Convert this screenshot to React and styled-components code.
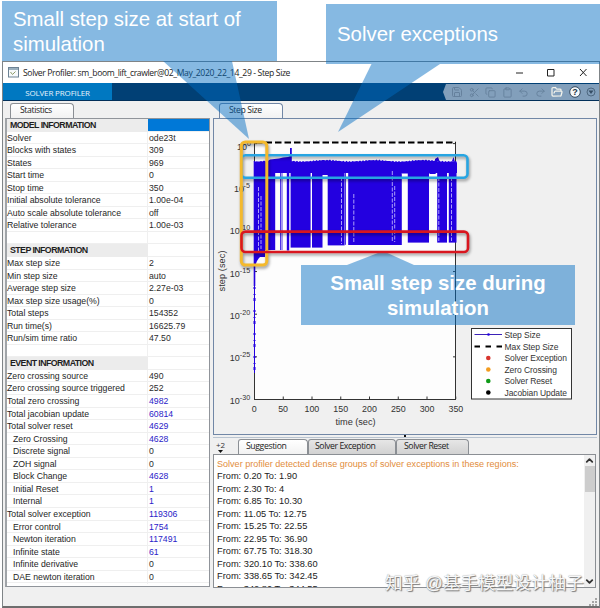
import styled, { createGlobalStyle } from "styled-components";
import { Save, Scissors, Copy, Clipboard, Undo2, Redo2, FolderOpen, ChevronUp, ChevronDown } from "lucide-react";

const GlobalStyle = createGlobalStyle`
    * {
        box-sizing: border-box;
    }
    body {
        margin: 0;
        background-color: #fff;
        font-family: "Liberation Sans", Arial, sans-serif;
    }
`
const Page = styled.div`
    position: relative;
    width: 600px;
    height: 608px;
    padding: 61px 0 0 2px;
    overflow: hidden;
`
const Window = styled.div`
    height: 547px;
    display: flex;
    flex-direction: column;
    border: 1px solid #7f8487;
    border-bottom: 2px solid #6e6e6e;
    background-color: #f0f0f0;
`
const TitleBar = styled.div`
    height: 21px;
    flex: none;
    display: flex;
    align-items: center;
    padding-left: 5px;
    background-color: #fff;
`
const Title = styled.div`
    flex: 1;
    margin-left: 4px;
    font: 8.6px "Open Sans", sans-serif;
    letter-spacing: -0.37px;
    color: #1c1c1c;
    white-space: nowrap;
`
const WindowButtons = styled.svg`
    width: 90px;
    height: 20px;
    flex: none;
`
const Ribbon = styled.div`
    height: 18px;
    flex: none;
    display: flex;
    justify-content: space-between;
    background-color: #014075;
    border-bottom: 1px solid #02305a;
`
const RibbonTab = styled.div`
    width: 109px;
    display: flex;
    align-items: center;
    justify-content: center;
    background-color: #0078c1;
    color: #e8f4fc;
    font: 8px "Open Sans", sans-serif;
    letter-spacing: -0.15px;
    padding-top: 2px;
`
const QuickAccess = styled.div`
    width: 156px;
    height: 16px;
    margin-top: 1px;
    padding: 0 3px 0 8px;
    display: flex;
    align-items: center;
    justify-content: space-between;
    background-color: #829fbb;
    color: #66819d;
    clip-path: polygon(3px 0, 100% 0, 100% 100%, 3px 100%, 0 50%);
`
const Content = styled.div`
    flex: 1;
    display: flex;
    padding: 2px 0 0 2px;
`
const StatsPane = styled.div`
    width: 208px;
    flex: none;
`
const RightPane = styled.div`
    flex: 1;
    min-width: 0;
`
const TabRow = styled.div`
    height: ${props => props.$height || 15}px;
    padding-left: ${props => props.$indent || 5}px;
    display: flex;
    align-items: flex-end;
`
const Tab = styled.div`
    width: ${props => props.$width}px;
    height: 15px;
    padding-left: ${props => props.$pad || 9}px;
    border: 1px solid ${props => props.$color || "#8b8f94"};
    border-bottom: none;
    border-radius: 3px 4px 0 0;
    background: ${props => props.$active ? "linear-gradient(#ffffff, #f2f2f2)" : "linear-gradient(#e6e6e6, #d2d2d2)"};
    color: #222;
    font: 8.7px/13px "Open Sans", sans-serif;
    letter-spacing: -0.4px;
    white-space: nowrap;
`
const StatsTable = styled.div`
    width: 205px;
    height: 469px;
    border: 1px solid #90949a;
    border-left: 2px solid #a0a4a8;
    background-color: #fff;
`
const StatsRow = styled.div`
    height: 12.56px;
    display: grid;
    grid-template-columns: 141px 1fr;
    border-bottom: 1px solid #efefef;
    font-size: 8.7px;
    line-height: 13px;
    color: #1e1e1e;
    white-space: nowrap;
`
const Name = styled.div`
    padding-left: ${props => props.$indent ? 6 : 0}px;
    border-right: 1px solid #f0f0f0;
`
const Heading = styled.div`
    padding-left: 3px;
    margin-bottom: -1px;
    background-color: #ececec;
    font-size: 8.8px;
    font-weight: bold;
    letter-spacing: -0.57px;
`
const Value = styled.div`
    padding-left: 1px;
    color: ${props => props.$link ? "#2a22c8" : "#2b2b2b"};
`
const SelectedCell = styled.div`
    background-color: #0078d7;
`
const ChartPanel = styled.div`
    height: 317px;
    margin-right: 2px;
    border: 1px solid #7187a6;
    background-color: #f0f0f0;
`
const ChartSvg = styled.svg`
    display: block;
    font-family: "Liberation Sans", Arial, sans-serif;
    fill: #333;
`
const Splitter = styled.div`
    height: 3px;
    margin-right: 2px;
    display: flex;
    justify-content: center;
    border-bottom: 1px solid #b9c4d0;
`
const SplitterMark = styled.div`
    width: 2px;
    height: 2px;
    background-color: #111;
`
const MoreTabs = styled.div`
    width: 22px;
    height: 15px;
    font: 8px/12px "Open Sans", sans-serif;
    color: #333;
`
const MoreArrow = styled.svg`
    display: block;
    margin: -1px 0 0 2px;
`
const Suggestions = styled.div`
    height: 134px;
    margin-right: 3px;
    display: flex;
    border: 1px solid #8b8f94;
    background-color: #fff;
`
const SuggestionText = styled.div`
    flex: 1;
    padding: 3px 0 0 3px;
    overflow: hidden;
    font-size: 9.25px;
    line-height: 12.56px;
    color: #222;
    white-space: nowrap;
`
const Warning = styled.div`
    margin-bottom: -0.6px;
    color: #e28d3c;
    font-size: 9.05px;
`
const Scrollbar = styled.div`
    width: 11px;
    display: flex;
    flex-direction: column;
    align-items: center;
    background-color: #f0f0f0;
    color: #333;
`
const Thumb = styled.div`
    width: 10px;
    height: 26px;
    margin-bottom: auto;
    background-color: #cdcdcd;
`
const Grip = styled.svg`
    display: block;
    margin: 10px 1px 0 auto;
`
const Callout = styled.div`
    position: absolute;
    left: ${props => props.$x}px;
    top: ${props => props.$y}px;
    width: ${props => props.$w}px;
    height: 60px;
    padding: ${props => props.$padding};
    background-color: rgba(0, 108, 194, 0.475);
    color: #fff;
    font-size: 20.4px;
    font-weight: ${props => props.$bold ? "bold" : "normal"};
    text-align: ${props => props.$bold ? "center" : "left"};
    line-height: 24.5px;
    white-space: nowrap;
`
const Overlay = styled.svg`
    position: absolute;
    left: 0;
    top: 0;
`
const Watermark = styled.div`
    position: absolute;
    left: 385px;
    top: 571px;
    font: 17.6px/24px "Liberation Sans", "Noto Sans CJK SC", sans-serif;
    color: rgba(255, 255, 255, 0.95);
    text-shadow: 1px 1px 1px #777, 0 0 1px #888;
    white-space: nowrap;
`

const stats = [
    ["Solver", "ode23t"],
    ["Blocks with states", "309"],
    ["States", "969"],
    ["Start time", "0"],
    ["Stop time", "350"],
    ["Initial absolute tolerance", "1.00e-04"],
    ["Auto scale absolute tolerance", "off"],
    ["Relative tolerance", "1.00e-03"],
    ["", ""],
    ["STEP INFORMATION"],
    ["Max step size", "2"],
    ["Min step size", "auto"],
    ["Average step size", "2.27e-03"],
    ["Max step size usage(%)", "0"],
    ["Total steps", "154352"],
    ["Run time(s)", "16625.79"],
    ["Run/sim time ratio", "47.50"],
    ["", ""],
    ["EVENT INFORMATION"],
    ["Zero crossing source", "490"],
    ["Zero crossing source triggered", "252"],
    ["Total zero crossing", "4982", { link: true }],
    ["Total jacobian update", "60814", { link: true }],
    ["Total solver reset", "4629", { link: true }],
    ["Zero Crossing", "4628", { link: true, indent: true }],
    ["Discrete signal", "0", { indent: true }],
    ["ZOH signal", "0", { indent: true }],
    ["Block Change", "4628", { link: true, indent: true }],
    ["Initial Reset", "1", { link: true, indent: true }],
    ["Internal", "1", { link: true, indent: true }],
    ["Total solver exception", "119306", { link: true }],
    ["Error control", "1754", { link: true, indent: true }],
    ["Newton iteration", "117491", { link: true, indent: true }],
    ["Infinite state", "61", { link: true, indent: true }],
    ["Infinite derivative", "0", { indent: true }],
    ["DAE newton iteration", "0", { indent: true }],
]

const regions = [
    "0.20 To: 1.90",
    "2.30 To: 4",
    "6.85 To: 10.30",
    "11.05 To: 12.75",
    "15.25 To: 22.55",
    "22.95 To: 36.90",
    "67.75 To: 318.30",
    "320.10 To: 338.60",
    "338.65 To: 342.45",
    "342.80 To: 344.55",
]

// [left, right, bottom] of every dense group of steps
const groups = [
    [254, 265, 256], [265, 275.2, 249], [280, 280.8, 249], [281.6, 282.4, 249],
    [286.8, 289.2, 249.5], [290.6, 310.6, 246.6], [312, 322.5, 246.6],
    [327.7, 344.6, 244.4], [345.2, 346, 243.8], [348.2, 401.8, 244],
    [407.8, 429, 241.6], [437.2, 447, 241.6], [448.8, 456.5, 241.6],
]

// [x, top, bottom] of the thin breaks inside a group
const breaks = [
    [258.5, 186, 250], [261, 195, 248], [341.500, 176, 243], [353.8, 193, 241],
    [392.3, 170, 241], [394.7, 185, 241], [438.8, 176, 240], [451.5, 176, 240],
]

const legend = [
    ["Step Size", null],
    ["Max Step Size", null],
    ["Solver Exception", "#d8352e"],
    ["Zero Crossing", "#f39c1f"],
    ["Solver Reset", "#109a18"],
    ["Jacobian Update", "#000"],
]

const legendWidths = [36, 54, 62.5, 52.5, 47.5, 62.5]

// uneven upper edge of the step size band
const band = () => {
    let d = "M254 172 V160"
    for (let x = 255; x <= 456; x += 1.5) {
        const y = 159.8 + Math.sin(x * 0.13) * 0.7 + Math.sin(x * 1.9) * 0.6
        d += ` L${x} ${y.toFixed(1)}`
    }
    return d + " L457 162 V172 Z"
}

const Chart = () => (
    <ChartSvg width="382" height="315" viewBox="214 118 382 315">
        <rect x="254.5" y="141.5" width="201" height="257" fill="#fdfdfd" />
        <path d="M254.5 141V398.5H456M455.5 141V398" fill="none" stroke="#333" strokeWidth="1" />
        {[0, 50, 100, 150, 200, 250, 300, 350].map((t, i) => (
            <g key={t}>
                <path d={`M${254.5 + i * 28.75} 398v-2.5`} stroke="#333" />
                <text x={254.3 + i * 28.8} y="411.3" fontSize="8.9" textAnchor="middle">{t}</text>
            </g>
        ))}
        {["0", "-5", "-10", "-15", "-20", "-25", "-30"].map((e, i) => (
            <g key={e}>
                <path d={`M254 ${142.6 + i * 42.65}h3M456 ${142.6 + i * 42.65}h-3`} stroke="#333" />
                <text x={i === 0 ? 237 : i === 1 ? 234 : 229.8} y={148.8 + i * 42.3} fontSize="9">10</text>
                <text x={i === 0 ? 247 : i === 1 ? 243.5 : 239.8} y={144.8 + i * 42.3} fontSize="7.2">{e}</text>
            </g>
        ))}
        <text x="355.5" y="424" fontSize="9.2" textAnchor="middle" textLength="40">time (sec)</text>
        <text transform="translate(225 270) rotate(-90)" fontSize="9.2" textAnchor="middle" textLength="41">step (sec)</text>
        <path d="M254 141.5H456" stroke="#000" strokeWidth="1.8" strokeDasharray="6.5 3" strokeDashoffset="-2" />
        <g fill="#2300e0">
            <path d={band()} />
            <path d="M268 160l2-1.500 9-1 4-1 5-.5 2-1v-8h1.800v13zM435 160v-2l3-2 1.500 4zM452 160l1.500-4 1.500 5z" />
            <path d="M275 169h5v1h-5zM322 168h6v6h-6zM402 168h6v4.500h-6zM429 168h8.500l-2 5h-6z" />
            {groups.map(([left, right, bottom]) => (
                <rect key={left} x={left} y="168" width={right - left} height={bottom - 168} />
            ))}
            <path d="M254 254h8l-3 3-2 3-2 5z" />
            <rect x="253.7" y="160" width="1.6" height="125" />
        </g>
        <path d="M254.5 285V372" stroke="#2300e0" strokeWidth="1" />
        <path d="M254.5 286V372" stroke="#2300e0" strokeWidth="2" strokeDasharray="2 5 1 3 3 9" />
        {breaks.map(([x, top, bottom]) => (
            <path key={x} d={`M${x} ${top}V${bottom}`} stroke="#cfc8ff" strokeWidth="0.8" strokeDasharray="4 1.5" />
        ))}
        <rect x="471.5" y="327.5" width="100" height="70.5" fill="#fff" stroke="#333" />
        <path d="M474.5 333.5H502" stroke="#3b22b8" />
        <circle cx="488.5" cy="333.5" r="1.3" fill="#2300e0" />
        <path d="M474.5 345.6H502" stroke="#000" strokeWidth="2" strokeDasharray="5.5 5.5" />
        {legend.map(([label, color], i) => (
            <g key={label}>
                {color && <circle cx="488.3" cy={334 + i * 11.5} r="2.3" fill={color} />}
                <text x="504.5" y={337.3 + i * 11.5} fontSize="8.5" textLength={legendWidths[i]}>{label}</text>
            </g>
        ))}
    </ChartSvg>
)

const HighlightBoxes = styled.g`
    fill: none;
    stroke-width: 2.6;
    filter: drop-shadow(1px 2px 1.5px rgba(0, 0, 0, 0.4));
`

const Annotations = () => (
    <Overlay width="600" height="608" viewBox="0 0 600 608">
        <g fill="rgb(0, 108, 194)" fillOpacity="0.475">
            <path d="M163 61H232L249 139Z" />
            <path d="M371.5 64H440L338 132Z" />
            <path d="M347 265L383 251L414 265Z" />
        </g>
        <HighlightBoxes>
            <rect x="241.5" y="155.2" width="226" height="22.5" rx="4" stroke="#28a5e2" />
            <rect x="241.3" y="142" width="25.5" height="123" rx="4" stroke="#f4b92c" strokeWidth="3" />
            <rect x="241.5" y="231.6" width="226.5" height="20.4" rx="4" stroke="#d9161f" />
        </HighlightBoxes>
    </Overlay>
)

const App = () => {
    return(
        <Page>
            <GlobalStyle />
            <Window>
                <TitleBar>
                    <svg width="11" height="11" viewBox="0 0 11 11">
                        <rect x="0.5" y="0.5" width="10" height="9.5" fill="#f6f9fb" stroke="#6c8294" />
                        <path d="M1 2h9" stroke="#7d97aa" strokeWidth="1.5" />
                        <path d="M2.5 5l2 2.5 3-3" fill="none" stroke="#8e9c6a" />
                    </svg>
                    <Title>Solver Profiler: sm_boom_lift_crawler@02_May_2020_22_14_29 - Step Size</Title>
                    <WindowButtons viewBox="509 62 90 20">
                        <path d="M516 72.5h7M547.5 69h6.500v6.500h-6.500zM580 68.500l6.500 7M586.500 68.500l-6.500 7" transform="translate(0 -0.5)" fill="none" stroke="#222" />
                    </WindowButtons>
                </TitleBar>
                <Ribbon>
                    <RibbonTab>SOLVER PROFILER</RibbonTab>
                    <QuickAccess>
                        <Save size={12} />
                        <Scissors size={11} />
                        <Copy size={11} />
                        <Clipboard size={11} />
                        <Undo2 size={11} />
                        <Redo2 size={11} />
                        <FolderOpen size={12} color="#f4f4ec" strokeWidth={2.5} />
                        <svg width="12" height="12" viewBox="0 0 12 12">
                            <circle cx="6" cy="6" r="5.3" fill="#f5f8fa" stroke="#34495e" />
                            <text x="6" y="9.3" fontSize="9" fontWeight="bold" textAnchor="middle" fill="#234">?</text>
                        </svg>
                        <svg width="10" height="10" viewBox="0 0 10 10">
                            <circle cx="5" cy="5" r="4" fill="none" stroke="#4e6880" />
                            <path d="M2.5 3.5h5L5 7z" fill="#344c63" />
                        </svg>
                    </QuickAccess>
                </Ribbon>
                <Content>
                    <StatsPane>
                        <TabRow>
                            <Tab $active $width={64}>Statistics</Tab>
                        </TabRow>
                        <StatsTable>
                            <StatsRow>
                                <Heading>MODEL INFORMATION</Heading>
                                <SelectedCell />
                            </StatsRow>
                            {stats.map(([name, value, flags = {}], i) => (
                                <StatsRow key={i}>
                                    {value === undefined
                                        ? <Heading>{name}</Heading>
                                        : <Name $indent={flags.indent}>{name}</Name>}
                                    <Value $link={flags.link}>{value}</Value>
                                </StatsRow>
                            ))}
                        </StatsTable>
                    </StatsPane>
                    <RightPane>
                        <TabRow $indent={6}>
                            <Tab $active $width={64} $color="#7187a6">Step Size</Tab>
                        </TabRow>
                        <ChartPanel>
                            <Chart />
                        </ChartPanel>
                        <Splitter>
                            <SplitterMark />
                        </Splitter>
                        <TabRow $height={16} $indent={3}>
                            <MoreTabs>
                                +2
                                <MoreArrow width="5" height="3" viewBox="0 0 5 3">
                                    <path d="M0 0h5L2.5 3z" fill="#111" />
                                </MoreArrow>
                            </MoreTabs>
                            <Tab $active $width={70} $pad={7}>Suggestion</Tab>
                            <Tab $width={88} $pad={6}>Solver Exception</Tab>
                            <Tab $width={73} $pad={7}>Solver Reset</Tab>
                        </TabRow>
                        <Suggestions>
                            <SuggestionText>
                                <Warning>Solver profiler detected dense groups of solver exceptions in these regions:</Warning>
                                {regions.map(region => <div key={region}>From: {region}</div>)}
                            </SuggestionText>
                            <Scrollbar>
                                <ChevronUp size={11} strokeWidth={4} />
                                <Thumb />
                                <ChevronDown size={11} strokeWidth={4} />
                            </Scrollbar>
                        </Suggestions>
                        <Grip width="9" height="9" viewBox="0 0 9 9">
                            <path d="M6 1h2M3 4h2M6 4h2M0 7h2M3 7h2M6 7h2" stroke="#a5a5a5" strokeWidth="2" />
                        </Grip>
                    </RightPane>
                </Content>
            </Window>
            <Callout $x={2} $y={1} $w={275} $padding="6px 0 0 11px">
                Small step size at start of<br />simulation
            </Callout>
            <Callout $x={326} $y={4} $w={274} $padding="18px 0 0 11px">
                Solver exceptions
            </Callout>
            <Callout $x={301} $y={265} $w={274} $bold $padding="6px 0 0 0">
                Small step size during<br />simulation
            </Callout>
            <Annotations />
            <Watermark>知乎 @基手模型设计柚子</Watermark>
        </Page>
    )
}


export default App;
